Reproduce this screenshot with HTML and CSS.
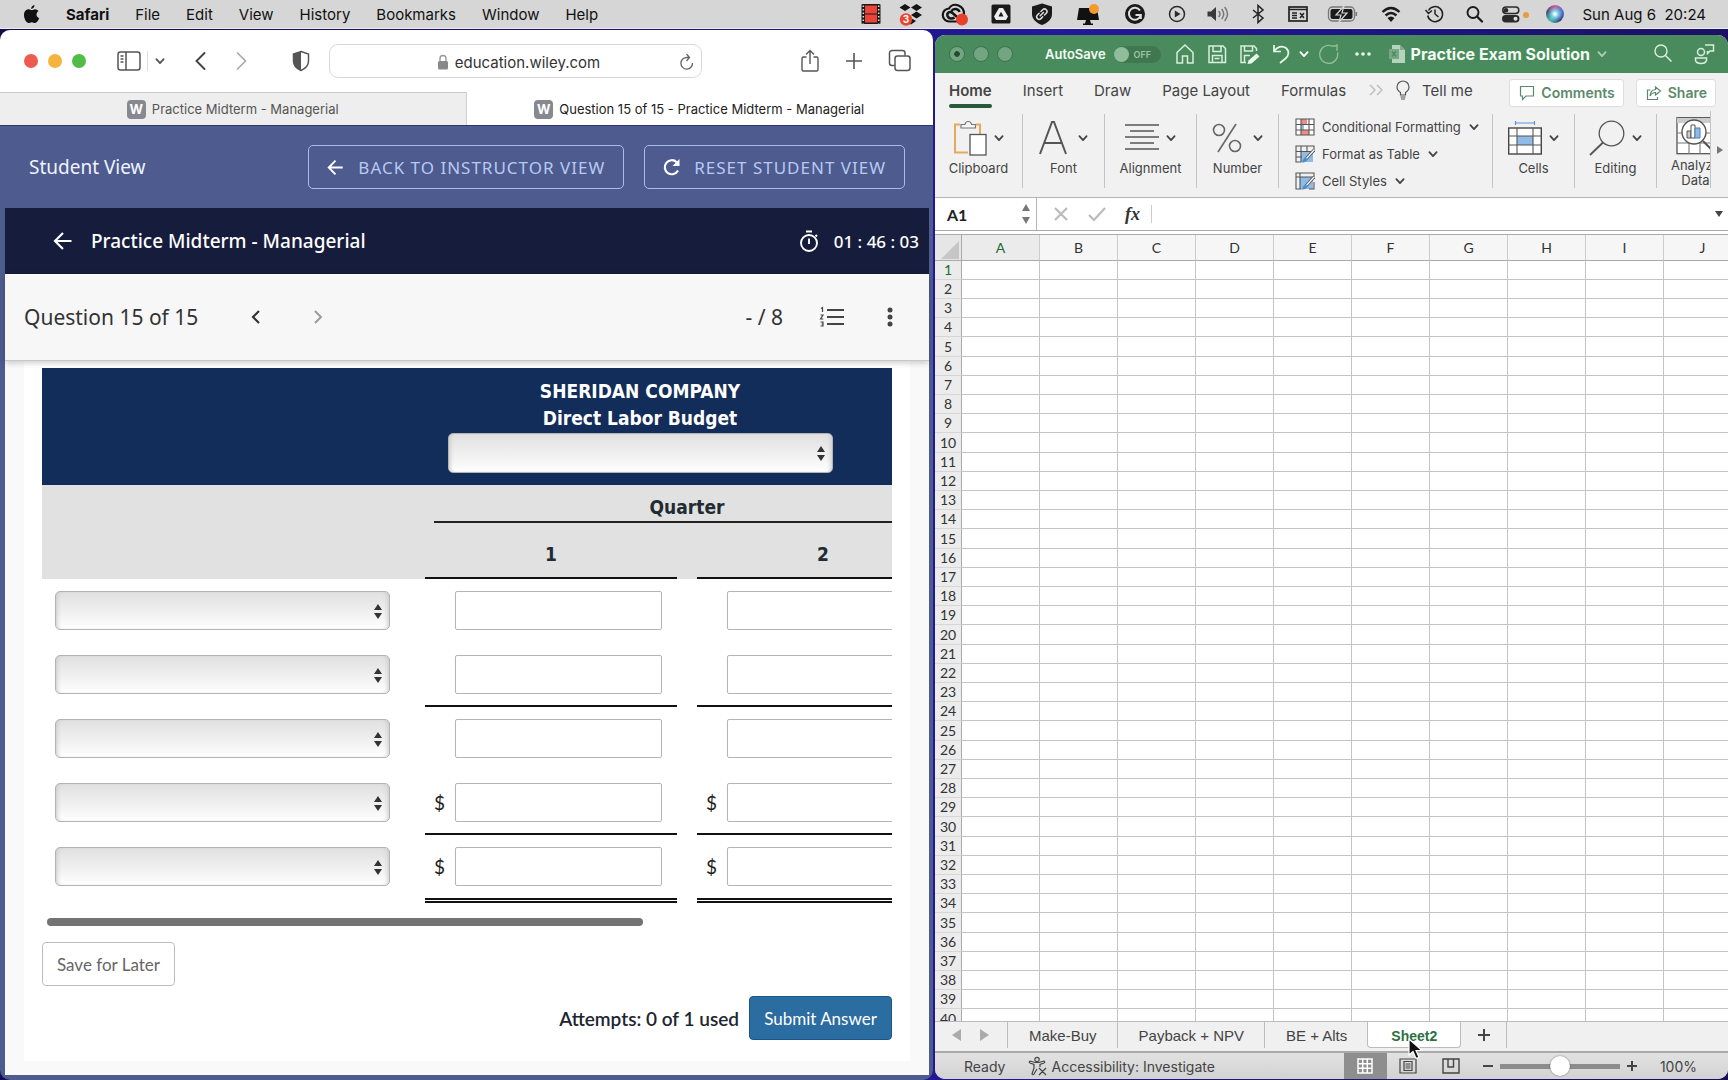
FILE: index.html
```html
<!DOCTYPE html>
<html lang="en">
<head>
<meta charset="utf-8">
<title>Desktop</title>
<meta name="viewport" content="width=device-width, initial-scale=1">
<link rel="stylesheet" href="styles.css">
</head>
<body>
<svg class="defs" aria-hidden="true">
  <symbol id="chev" viewBox="0 0 10 10"><path d="M2 3.500 5 6.800 8 3.500" fill="none" stroke="currentColor" stroke-width="1.500" stroke-linecap="round" stroke-linejoin="round"/></symbol>
  <symbol id="arrow-left" viewBox="0 0 20 20"><path d="M18.500 10H2.500M10 2 2 10l8 8" fill="none" stroke="currentColor" stroke-width="2.200"/></symbol>
</svg>

<header class="menubar">
  <nav class="menus" aria-label="Menu bar">
    <button class="menu" aria-label="Apple"><svg width="17" height="20" viewBox="0 0 17 20"><path d="M11.500 1c.1 1.900-1.500 3.900-3.300 3.900C8 3 9.700 1.100 11.500 1zM12 5.200c1.500 0 2.800.8 3.600 1.900-3.100 1.900-2.600 6 .6 7.200C15.500 16.200 13.800 19 12 19c-1.300 0-1.700-.8-3.200-.8S6.900 19 5.700 19C3.400 19 1 14.800 1 11c0-3.600 2.300-5.700 4.600-5.700 1.400 0 2.400.9 3.300.9.900 0 2-.9 3.100-1z" fill="#111"/></svg></button>
    <button class="menu app">Safari</button>
    <button class="menu">File</button>
    <button class="menu">Edit</button>
    <button class="menu">View</button>
    <button class="menu">History</button>
    <button class="menu">Bookmarks</button>
    <button class="menu">Window</button>
    <button class="menu">Help</button>
  </nav>
  <div class="status-icons">
    <svg width="22" height="22" viewBox="0 0 22 22"><rect x="1.500" y="1" width="19" height="20" rx="1" fill="#1a1a1a"/><rect x="5" y="2.500" width="12" height="8" fill="#ec4238"/><rect x="5" y="11.500" width="12" height="8" fill="#ec4238"/><path d="M3.300 2.500v18M18.700 2.500v18" stroke="#ddd" stroke-width="1.500" stroke-dasharray="1.500 2"/></svg>
    <svg width="24" height="24" viewBox="0 0 24 24"><path d="M6 2l5.500 3.500L6 9 .5 5.500zM17.500 2 23 5.500 17.500 9 12 5.500zM17.500 9.500 23 13l-5.500 3.500L12 13zM12 16l5 3-5 3.500-4-2z" fill="#151515"/><circle cx="7" cy="17.500" r="6.200" fill="#e8442e"/><text x="7" y="21" text-anchor="middle" class="badge-num">3</text></svg>
    <svg width="32" height="24" viewBox="1 0 32 24"><path d="M10.500 19.500a6.500 6.500 0 0 1-.5-13C12 3 16 2 19.500 3.500 23 5 25 8 25 11.500c0 5-3.500 8-8 8z" fill="none" stroke="#151515" stroke-width="2.200"/><path d="M15.500 15.500c-2 1.500-6 1.500-7-1.500s2-5.500 5-3l4.500 4M12.500 9c2-3 7-2.500 8 1" fill="none" stroke="#151515" stroke-width="2.400"/><circle cx="23" cy="17.500" r="6" fill="#e8402a"/></svg>
    <svg width="24" height="22" viewBox="0 0 24 22"><rect x="2.500" y="1.500" width="19" height="19" rx="1.500" fill="#1a1a1a"/><path d="M10 5h4l5 8.500-2 3.500H7l-2-3.500z" fill="#eee"/><path d="M12 8.800l2.600 4.600H9.400z" fill="#1a1a1a"/></svg>
    <svg width="24" height="24" viewBox="0 0 24 24"><path d="M12 1.500l10 3V12c0 5.500-4.500 9-10 11C6.500 21 2 17.500 2 12V4.500z" fill="#1a1a1a"/><g transform="rotate(45 12 12)" fill="none" stroke="#ddd" stroke-width="1.500" stroke-linecap="round"><path d="M9.500 11V8.500a2.500 2.500 0 0 1 5 0V11M9.500 13.500V16a2.500 2.500 0 0 0 5 0v-2.500M12 10v4.500"/></g></svg>
    <svg width="34" height="24" viewBox="0 0 34 24"><path d="M8 6h18l2 12H6z" fill="#111"/><path d="M15 18h4l1 3.500h2V23H12v-1.500h2z" fill="#111"/><circle cx="23" cy="7" r="5" fill="#f39b2d"/></svg>
    <svg width="26" height="24" viewBox="0 0 26 24"><circle cx="13" cy="12" r="10" fill="#1a1a1a"/><path d="M18 8.500A6 6 0 1 0 18.800 13H13.500M18.800 12.500V17" fill="none" stroke="#ddd" stroke-width="2"/></svg>
    <svg width="24" height="24" viewBox="0 0 24 24"><circle cx="12" cy="12" r="7.500" fill="none" stroke="#2a2a2a" stroke-width="1.500"/><path d="M9.800 8.500v7l5.700-3.500z" fill="#2a2a2a"/></svg>
    <svg width="24" height="24" viewBox="0 0 24 24"><path d="M1.500 9.500h3.500L10 5v14l-5-4.500H1.500z" fill="#3a3a3a"/><path d="M13 9.500q2 2.500 0 5M16 7.500q3.500 4.500 0 9M19 5.500q5 6.500 0 13" fill="none" stroke="#777" stroke-width="1.500" stroke-linecap="round"/></svg>
    <svg width="22" height="24" viewBox="0 0 22 24"><path d="M6 8l10 8-5 4.500v-17L16 8 6 16" fill="none" stroke="#222" stroke-width="1.500"/></svg>
    <svg width="24" height="22" viewBox="0 0 24 22"><rect x="3" y="4" width="18" height="14" fill="none" stroke="#222" stroke-width="1.700"/><path d="M3 6.500h18M6 10h5M6 12.500h5M6 15h5M14 10l4 5M18 10l-4 5" stroke="#222" stroke-width="1.500"/></svg>
    <svg width="32" height="22" viewBox="0 0 32 22"><rect x="1.500" y="4" width="26" height="14" rx="4" fill="none" stroke="#777" stroke-width="1.300"/><rect x="3.500" y="6" width="22" height="10" rx="2" fill="#1a1a1a"/><path d="M17 3l-8 9h5l-2 7 8-9h-5z" fill="#1a1a1a" stroke="#d6d6d6" stroke-width="1.200"/><path d="M29.300 9v4" stroke="#777" stroke-width="1.600"/></svg>
    <svg width="30" height="22" viewBox="0 0 30 22"><g fill="none" stroke="#1a1a1a" stroke-width="2.400"><path d="M6.500 9q8.500-8 17 0M9.600 12.500q5.400-5 10.800 0"/></g><path d="M15 19l-3.500-4q3.500-3 7 0z" fill="#1a1a1a"/></svg>
    <svg width="24" height="24" viewBox="0 0 24 24"><path d="M5.500 8.500a7.500 7.500 0 1 1-.8 5M2.500 8l3 3.500L9 8.500M12 7.500V12l3.500 3" fill="none" stroke="#222" stroke-width="1.500"/></svg>
    <svg width="20" height="24" viewBox="0 0 20 24"><circle cx="9" cy="10.500" r="5.500" fill="none" stroke="#1a1a1a" stroke-width="1.900"/><path d="M13 14.500l5 5" stroke="#1a1a1a" stroke-width="2.300" stroke-linecap="round"/></svg>
    <svg width="28" height="20" viewBox="0 0 28 20"><rect x="1.800" y="3" width="16" height="6.500" rx="3.200" fill="none" stroke="#2a2a2a" stroke-width="1.500"/><circle cx="5" cy="6.200" r="2.300" fill="#2a2a2a"/><rect x="1" y="11" width="17.500" height="7.500" rx="3.700" fill="#2a2a2a"/><circle cx="14.500" cy="14.700" r="2" fill="#ddd"/><circle cx="25" cy="11" r="3" fill="#ec9a3c"/></svg>
    <span class="siri"></span>
    <span class="clock">Sun Aug 6&nbsp; 20:24</span>
  </div>
</header>

<main class="desktop">
  <section class="safari" aria-label="Safari">
    <div class="toolbar">
      <div class="lights"><button class="light red" aria-label="Close"></button><button class="light amber" aria-label="Minimise"></button><button class="light green" aria-label="Zoom"></button></div>
      <div class="side-tools">
        <button class="icon-btn" aria-label="Sidebar"><svg width="24" height="20" viewBox="0 0 24 20"><g fill="none" stroke="#555" stroke-width="1.500"><rect x="1" y="1" width="22" height="18" rx="2.500"/><path d="M9 1v18M3.500 5h3M3.500 8h3M3.500 11h3"/></g></svg></button>
        <span class="rule"></span>
        <button class="icon-btn" aria-label="Tab groups"><svg class="s12"><use href="#chev"/></svg></button>
      </div>
      <div class="nav-tools">
        <button class="icon-btn" aria-label="Back"><svg width="12" height="20" viewBox="0 0 12 20"><path d="M10.500 2 2.500 10l8 8" fill="none" stroke="#444" stroke-width="1.900" stroke-linecap="round"/></svg></button>
        <button class="icon-btn" aria-label="Forward"><svg width="12" height="20" viewBox="0 0 12 20"><path d="M1.500 2l8 8-8 8" fill="none" stroke="#aaa" stroke-width="1.700" stroke-linecap="round"/></svg></button>
      </div>
      <button class="icon-btn" aria-label="Privacy report"><svg width="18" height="22" viewBox="0 0 18 22"><path d="M9 1.500 16.500 4v7c0 4.500-3 7.500-7.500 9.500C4.500 18.500 1.500 15.500 1.500 11V4z" fill="none" stroke="#555" stroke-width="1.500"/><path d="M9 1.500V20.500C4.500 18.500 1.500 15.500 1.500 11V4z" fill="#555"/></svg></button>
      <div class="address">
        <span class="url"><svg width="12" height="16" viewBox="0 0 12 16"><rect x="1" y="7" width="10" height="8.500" rx="1.500" fill="#888"/><path d="M3 7V4.500a3 3 0 0 1 6 0V7" fill="none" stroke="#999" stroke-width="1.400"/></svg>education.wiley.com</span>
        <button class="icon-btn" aria-label="Reload"><svg width="16" height="18" viewBox="0 0 16 18"><path d="M13.500 10A5.800 5.800 0 1 1 8 4.500h2M7.500 1l3 3.500-3 3.500" fill="none" stroke="#666" stroke-width="1.300"/></svg></button>
      </div>
      <div class="end-tools">
        <button class="icon-btn" aria-label="Share"><svg width="20" height="24" viewBox="0 0 20 24"><path d="M6.500 8H3.500A1.500 1.500 0 0 0 2 9.500v11A1.500 1.500 0 0 0 3.500 22h13a1.500 1.500 0 0 0 1.500-1.500v-11A1.500 1.500 0 0 0 16.500 8h-3M10 15V2M6 5.500l4-4 4 4" fill="none" stroke="#555" stroke-width="1.400"/></svg></button>
        <button class="icon-btn" aria-label="New tab"><svg width="20" height="24" viewBox="0 0 20 24"><path d="M2 12h16M10 4v16" stroke="#555" stroke-width="1.600"/></svg></button>
        <button class="icon-btn" aria-label="Tab overview"><svg width="24" height="24" viewBox="0 0 24 24"><g fill="none" stroke="#555" stroke-width="1.500"><rect x="7" y="7" width="15" height="14.500" rx="2.500"/><path d="M6.500 16.500H4A2.500 2.500 0 0 1 1.500 14V4A2.500 2.500 0 0 1 4 1.500h10.500A2.500 2.500 0 0 1 17 4v2.500"/></g></svg></button>
      </div>
    </div>
    <div class="tabs">
      <a href="#midterm" class="tab"><span class="favicon">W</span>Practice Midterm - Managerial</a>
      <a href="#question" class="tab active"><span class="favicon">W</span>Question 15 of 15 - Practice Midterm - Managerial</a>
    </div>
    <div class="student-bar">
      <span class="student-title">Student View</span>
      <div class="student-actions">
        <button class="outline-btn"><svg width="17" height="17"><use href="#arrow-left"/></svg>BACK TO INSTRUCTOR VIEW</button>
        <button class="outline-btn"><svg width="17" height="18" viewBox="0 0 17 18"><path d="M15 12.500A7 7 0 1 1 13.700 4.200" fill="none" stroke="#fff" stroke-width="2.200"/><path d="M16.500 1v7h-7z" fill="#fff"/></svg>RESET STUDENT VIEW</button>
      </div>
    </div>
    <div class="exam-bar">
      <button class="icon-btn light-icon" aria-label="Back to list"><svg width="20" height="20"><use href="#arrow-left"/></svg></button>
      <h1 class="exam-title">Practice Midterm - Managerial</h1>
      <svg width="20" height="22" viewBox="0 0 20 22"><g fill="none" stroke="#fff" stroke-width="1.900"><circle cx="10" cy="13" r="8"/><path d="M10 8.500V14M7 1.500h6M16.500 5l1.500 1.500"/></g></svg>
      <span class="timer">01 : 46 : 03</span>
    </div>
    <div class="question-bar">
      <h2 class="question-title">Question 15 of 15</h2>
      <button class="icon-btn" aria-label="Previous question"><svg width="9" height="14" viewBox="0 0 9 14"><path d="M8 1 2 7l6 6" fill="none" stroke="#333" stroke-width="2.200"/></svg></button>
      <button class="icon-btn" aria-label="Next question"><svg width="9" height="14" viewBox="0 0 9 14"><path d="M1 1l6 6-6 6" fill="none" stroke="#999" stroke-width="1.900"/></svg></button>
      <div class="question-end">
        <span>- / 8</span>
        <button class="icon-btn" aria-label="Question list"><svg width="26" height="22" viewBox="0 0 26 22"><path d="M8 4h17M8 11h17M8 18h17" stroke="#444" stroke-width="2"/><path d="M2 2.500 3.500 1.500V6M1.500 9h2.500l-2.500 4h2.800M1.500 16h2.500v4H1.500M2.500 18H4" fill="none" stroke="#444" stroke-width="1.200"/></svg></button>
        <button class="icon-btn" aria-label="More"><svg width="6" height="20" viewBox="0 0 6 20"><g fill="#444"><circle cx="3" cy="3" r="2.500"/><circle cx="3" cy="10" r="2.500"/><circle cx="3" cy="17" r="2.500"/></g></svg></button>
      </div>
    </div>
    <div class="page">
      <div class="card">
        <div class="scroller">
          <table class="budget">
            <colgroup><col class="c-label"><col class="c-value"><col class="c-gap"><col class="c-value"><col class="c-gap"><col class="c-value"><col class="c-end"></colgroup>
            <thead>
              <tr class="title-row"><th colspan="7">SHERIDAN COMPANY<br>Direct Labor Budget<br><select class="pick period" aria-label="Budget period"><option></option></select></th></tr>
              <tr class="group-row"><th></th><th colspan="3"><div class="group-name">Quarter</div></th><th colspan="3"></th></tr>
              <tr class="col-row"><th></th><th class="line">1</th><th></th><th class="line">2</th><th></th><th class="line"></th><th></th></tr>
            </thead>
            <tbody>
              <tr><td><select class="pick" aria-label="Line 1"><option></option></select></td><td><div class="entry"><input aria-label="Line 1 quarter 1"></div></td><td></td><td><div class="entry"><input aria-label="Line 1 quarter 2"></div></td><td></td><td></td><td></td></tr>
              <tr><td><select class="pick" aria-label="Line 2"><option></option></select></td><td class="line"><div class="entry"><input aria-label="Line 2 quarter 1"></div></td><td></td><td class="line"><div class="entry"><input aria-label="Line 2 quarter 2"></div></td><td></td><td class="line"></td><td></td></tr>
              <tr><td><select class="pick" aria-label="Line 3"><option></option></select></td><td><div class="entry"><input aria-label="Line 3 quarter 1"></div></td><td></td><td><div class="entry"><input aria-label="Line 3 quarter 2"></div></td><td></td><td></td><td></td></tr>
              <tr><td><select class="pick" aria-label="Line 4"><option></option></select></td><td class="line"><div class="entry"><span>$</span><input aria-label="Line 4 quarter 1"></div></td><td></td><td class="line"><div class="entry"><span>$</span><input aria-label="Line 4 quarter 2"></div></td><td></td><td class="line"></td><td></td></tr>
              <tr class="total"><td><select class="pick" aria-label="Line 5"><option></option></select></td><td class="double"><div class="entry"><span>$</span><input aria-label="Line 5 quarter 1"></div></td><td></td><td class="double"><div class="entry"><span>$</span><input aria-label="Line 5 quarter 2"></div></td><td></td><td class="double"></td><td></td></tr>
            </tbody>
          </table>
        </div>
        <div class="track"><div class="thumb"></div></div>
        <button class="save">Save for Later</button>
        <div class="submit-row"><span class="attempts">Attempts: 0 of 1 used</span><button class="submit">Submit Answer</button></div>
      </div>
    </div>
  </section>

  <section class="excel" aria-label="Spreadsheet">
    <div class="titlebar">
      <div class="lights dim"><span class="light edited"></span><span class="light"></span><span class="light"></span></div>
      <label class="autosave">AutoSave <span class="toggle"><input type="checkbox">OFF</span></label>
      <div class="quick">
        <svg width="24" height="22" viewBox="0 0 24 22"><path d="M4 9.500 12 2l8 7.500V20h-5.500v-7h-5v7H4z" fill="none" stroke="#d9f0dd" stroke-width="1.500"/></svg>
        <svg width="24" height="22" viewBox="0 0 24 22"><g fill="none" stroke="#d9f0dd" stroke-width="1.500"><path d="M4 3h14l2.500 2.500V19.500H4z"/><path d="M8 3v5.500h8V3M7.500 19.500V12.500h9.500v7M9.500 15.500h5"/></g></svg>
        <svg width="24" height="22" viewBox="0 0 24 22"><g fill="none" stroke="#d9f0dd" stroke-width="1.500"><path d="M9 19.500H4V3h13l2.500 2.500V8"/><path d="M7.500 3v5h8V3M7.500 19.500V12.500H13"/></g><path d="M19.500 10.500l3 3-8 7-4 .5 1-3.500z" fill="#e8fbe9"/></svg>
        <svg width="24" height="22" viewBox="0 0 24 22"><path d="M5 2v6.500h7M5 8C8 4 13 2 17 5c4 3.500 2.500 8-.5 10.500L11 20" fill="none" stroke="#e8fbe9" stroke-width="1.700"/></svg>
      </div>
      <svg class="s12 white"><use href="#chev"/></svg>
      <svg class="redo" width="20" height="22" viewBox="0 0 20 22"><path d="M18.500 9.500A9 9 0 1 1 13 3h5M18 1v7" fill="none" stroke="#8fc09c" stroke-width="1.300"/></svg>
      <svg class="more" width="18" height="6" viewBox="0 0 18 6"><g fill="#e8fbe9"><circle cx="3" cy="3" r="1.800"/><circle cx="9" cy="3" r="1.800"/><circle cx="15" cy="3" r="1.800"/></g></svg>
      <div class="doc"><svg width="16" height="18" viewBox="0 0 16 18"><path d="M3 0h8l5 5v13H3z" fill="#b5d3bd"/><path d="M11 0v5h5" fill="#7fab8b"/><rect y="4" width="10" height="10" fill="#77a885"/><path d="M3 6.500l4 5M7 6.500l-4 5" stroke="#4a8b5e" stroke-width="1.300"/></svg>Practice Exam Solution<svg class="s12 pale"><use href="#chev"/></svg></div>
      <div class="title-end">
        <svg width="20" height="20" viewBox="0 0 20 20"><circle cx="8" cy="8" r="6" fill="none" stroke="#d9f0dd" stroke-width="1.400"/><path d="M12.500 12.500l6 6" stroke="#d9f0dd" stroke-width="1.500"/></svg>
        <svg width="22" height="22" viewBox="0 0 22 22"><g fill="none" stroke="#d9f0dd" stroke-width="1.500"><circle cx="8" cy="9" r="3.500"/><path d="M2.500 15h11v2.500q-1 3-5.500 3t-5.500-3zM12 2h8.500v6H17l-2.500 2.500V8"/></g></svg>
      </div>
    </div>
    <div class="ribbon-tabs">
      <a href="#home" class="current">Home</a><a href="#insert">Insert</a><a href="#draw">Draw</a><a href="#layout">Page Layout</a><a href="#formulas">Formulas</a>
      <svg class="double-chev" width="16" height="12" viewBox="0 0 16 12"><path d="M2 1l5 5-5 5M9 1l5 5-5 5" fill="none" stroke="#bbb" stroke-width="1.400"/></svg>
      <button class="tell"><svg width="14" height="20" viewBox="0 0 14 20"><path d="M4.500 15V12.500C2 11 1 9 1 7a6 6 0 0 1 12 0c0 2-1 4-3.500 5.500V15zM4.500 17h5M5 19h4" fill="none" stroke="#555" stroke-width="1.200"/></svg>Tell me</button>
      <div class="ribbon-end">
        <button class="pill"><svg width="16" height="16" viewBox="0 0 16 16"><path d="M1.500 1.500h13v9.500H7L3.500 14.500V11h-2z" fill="none" stroke="#5b8a69" stroke-width="1.200"/></svg>Comments</button>
        <button class="pill"><svg width="16" height="16" viewBox="0 0 16 16"><path d="M4.500 5H1.500v9.500h10V12M9.500 2l5 4-5 4V7.500Q6 7.500 4 11q.5-6 5.500-6.500z" fill="none" stroke="#5b8a69" stroke-width="1.200"/></svg>Share</button>
      </div>
    </div>
    <div class="ribbon">
      <div class="group w88"><div class="tool"><svg width="34" height="36" viewBox="0 0 34 36"><path d="M7 4.500H2v28h13M23 4.500h4V14" fill="none" stroke="#e9a95a" stroke-width="2"/><path d="M8 8V4.500h4c.5-4 6-4 6.500 0h4V8z" fill="#f6f6f6" stroke="#777" stroke-width="1.200"/><rect x="17" y="14.500" width="16" height="20.500" fill="#fff" stroke="#555" stroke-width="1.300"/></svg><svg class="s12"><use href="#chev"/></svg></div>Clipboard</div>
      <div class="group w82"><div class="tool wide"><svg width="28" height="36" viewBox="0 0 28 36"><path d="M1 34 13 2h2l12 32M5.500 23h17" fill="none" stroke="#555" stroke-width="2"/></svg><svg class="s12"><use href="#chev"/></svg></div>Font</div>
      <div class="group w92"><div class="tool"><svg width="34" height="30" viewBox="0 0 34 30"><path d="M0 2h34M5 8h24M0 14h34M5 20h24M0 26h34" stroke="#555" stroke-width="1.400"/></svg><svg class="s12"><use href="#chev"/></svg></div>Alignment</div>
      <div class="group w82"><div class="tool wide"><svg width="30" height="32" viewBox="0 0 30 32"><g fill="none" stroke="#666" stroke-width="1.600"><circle cx="7" cy="8" r="5.500"/><circle cx="23" cy="24" r="5.500"/><path d="M24 2 6 30"/></g></svg><svg class="s12"><use href="#chev"/></svg></div>Number</div>
      <div class="styles-group">
        <button class="style-row"><svg width="20" height="18" viewBox="0 0 20 18"><rect x="1" y="1" width="18" height="16" fill="#fff"/><path d="M6 1h6v5H6zM6 12h8v5H6z" fill="#f08a86"/><path d="M6 6h3v6H6z" fill="#8fbbe6"/><path d="M1 1h18v16H1zM1 6.500h18M1 12h18M6 1v16M14 1v16" fill="none" stroke="#555" stroke-width="1.100"/></svg>Conditional Formatting<svg class="s12"><use href="#chev"/></svg></button>
        <button class="style-row"><svg width="20" height="18" viewBox="0 0 20 18"><path d="M6 6h12v11H6z" fill="#8fbbe6"/><path d="M19 5V1H1v16h5M1 6.500h18M1 12h6M6 1v16M12 1v6" fill="none" stroke="#555" stroke-width="1.100"/><path d="M19 5l-8 9" stroke="#555" stroke-width="3"/><path d="M19 5l-8 9" stroke="#fff" stroke-width="1.200"/><path d="M10 12.500q3 1 2 3t-6 2q2-1 2-3z" fill="#4f8fd0"/></svg>Format as Table<svg class="s12"><use href="#chev"/></svg></button>
        <button class="style-row"><svg width="20" height="18" viewBox="0 0 20 18"><path d="M5 5h13v12H5z" fill="#8fbbe6"/><path d="M19 5V1H1v16h5M19 10v7h-5M1 5h18M5 1v16" fill="none" stroke="#555" stroke-width="1.100"/><path d="M19 5l-8 9" stroke="#555" stroke-width="3"/><path d="M19 5l-8 9" stroke="#fff" stroke-width="1.200"/><path d="M10 12.500q3 1 2 3t-6 2q2-1 2-3z" fill="#4f8fd0"/></svg>Cell Styles<svg class="s12"><use href="#chev"/></svg></button>
      </div>
      <div class="group w82"><div class="tool"><svg width="34" height="34" viewBox="0 0 34 34"><path d="M7.500 2h19M7.500 0v4M26.500 0v4" stroke="#5b95cf" stroke-width="1.200"/><rect x="0.700" y="7" width="32.600" height="26" fill="#fff" stroke="#444" stroke-width="1.400"/><path d="M9 15h16v9H9z" fill="#8fbbe6"/><path d="M0 15h34M0 24h34M9 7v26M25 7v26" stroke="#555" stroke-width="1.100"/></svg><svg class="s12"><use href="#chev"/></svg></div>Cells</div>
      <div class="group w82"><div class="tool"><svg width="36" height="36" viewBox="0 0 36 36"><circle cx="22.500" cy="13.500" r="12.300" fill="none" stroke="#555" stroke-width="1.300"/><path d="M14 22.500 1 35" stroke="#555" stroke-width="1.800"/></svg><svg class="s12"><use href="#chev"/></svg></div>Editing</div>
      <div class="clip"><div class="group w78"><div class="tool"><svg width="40" height="38" viewBox="0 0 40 38"><rect x="1" y="0.700" width="38" height="36" fill="#fff" stroke="#555" stroke-width="1.300"/><path d="M1 1h38v5H1z" fill="#ccc"/><path d="M1 16h38M1 26h38M13 26v11M24 26v11" stroke="#777" stroke-width="1.100"/><circle cx="18" cy="15" r="12" fill="#fff" stroke="#555" stroke-width="1.400"/><path d="M27 24l8 8" stroke="#555" stroke-width="2"/><path d="M11 14h4v7h-4z" fill="#ccc" stroke="#555"/><path d="M15 8h4v13h-4z" fill="#fff" stroke="#555"/><path d="M19 11h5v10h-5z" fill="#8fbbe6" stroke="#4a7fb5"/></svg></div>Analyze<br>Data</div></div>
      <button class="ribbon-more" aria-label="More tools"><svg width="8" height="10" viewBox="0 0 8 10"><path d="M1 1v8l6-4z" fill="#777"/></svg></button>
    </div>
    <div class="formula-bar">
      <span class="cell-ref">A1</span>
      <svg width="10" height="24" viewBox="0 0 10 24"><path d="M1 9h8L5 2zM1 15h8l-4 7z" fill="#777"/></svg>
      <span class="rule tall"></span>
      <svg class="cancel" width="16" height="16" viewBox="0 0 16 16"><path d="M2 2l12 12M14 2 2 14" stroke="#bbb" stroke-width="2.200"/></svg>
      <svg width="18" height="16" viewBox="0 0 18 16"><path d="M1 9l5 5L17 2" fill="none" stroke="#bbb" stroke-width="2.200"/></svg>
      <span class="fx">fx</span>
      <input class="formula" aria-label="Formula">
      <svg width="10" height="8" viewBox="0 0 10 8"><path d="M1 1h8L5 7z" fill="#444"/></svg>
    </div>
    <div class="grid-area"><table class="grid"><thead><tr id="letters"><th class="corner"><svg width="18" height="18" viewBox="0 0 18 18"><path d="M18 0v18H0z" fill="#c6c6c6"/></svg></th></tr></thead><tbody id="rows"></tbody></table></div>
    <div class="sheet-tabs">
      <div class="sheet-arrows"><svg width="10" height="12" viewBox="0 0 10 12"><path d="M9 0v12L0 6z" fill="#aaa"/></svg><svg width="10" height="12" viewBox="0 0 10 12"><path d="M1 0v12l9-6z" fill="#aaa"/></svg></div>
      <a href="#s1">Make-Buy</a><a href="#s2">Payback + NPV</a><a href="#s3" class="bare">BE + Alts</a>
      <a href="#s4" class="on">Sheet2<svg class="pointer" width="16" height="22" viewBox="0 0 16 22"><path d="M1 1v16l4-3.500 3 7 3-1.300-3-6.700h6z" fill="#111" stroke="#fff" stroke-width="1.200"/></svg></a>
      <button class="add" aria-label="Add sheet"><svg width="14" height="14" viewBox="0 0 14 14"><path d="M7 1v12M1 7h12" stroke="#444" stroke-width="2"/></svg></button>
    </div>
    <div class="status">
      <span>Ready</span>
      <span class="access"><svg width="20" height="20" viewBox="0 0 20 20"><g fill="none" stroke="#444" stroke-width="1.200"><circle cx="9" cy="3.500" r="2.200"/><path d="M2 5q-1.500 1 0 2l4 1.500V12l-2 6q1 1.500 2 0l3-5M16 5q1.500 1 0 2l-4 1.500V11M2 5l5 1.500h4L16 5M11 12l7 7M18 12l-7 7"/></g></svg>Accessibility: Investigate</span>
      <div class="views">
        <button class="view sel" aria-label="Normal view"><svg width="16" height="16" viewBox="0 0 16 16"><path d="M1 1h14v14H1zM1 5.700h14M1 10.300h14M5.700 1v14M10.300 1v14" fill="none" stroke="#fff" stroke-width="1.500"/></svg></button>
        <button class="view" aria-label="Page layout view"><svg width="18" height="16" viewBox="0 0 18 16"><path d="M1 1h16v14H1zM5 3.500h8v9H5zM6.500 6h5M6.500 8h5M6.500 10h5" fill="none" stroke="#444" stroke-width="1.200"/></svg></button>
        <button class="view" aria-label="Page break view"><svg width="18" height="16" viewBox="0 0 18 16"><path d="M1 1h16v14H1zM6 1v8h5.500V1" fill="none" stroke="#444" stroke-width="1.400"/></svg></button>
      </div>
      <div class="zoom"><svg width="10" height="10" viewBox="0 0 10 10"><path d="M0 5h10" stroke="#444" stroke-width="2"/></svg><input type="range" min="0" max="100" value="50" aria-label="Zoom"><svg width="10" height="10" viewBox="0 0 10 10"><path d="M0 5h10M5 0v10" stroke="#444" stroke-width="2"/></svg></div>
      <span>100%</span>
    </div>
  </section>
</main>
<script src="script.js"></script>
</body>
</html>
```
FILE: styles.css
```css
* { box-sizing: border-box; }
body { margin: 0; height: 100vh; display: flex; flex-direction: column; overflow: hidden; background: linear-gradient(100deg, #140a45, #24189a 55%, #180f55); font-family: Inter, "Liberation Sans", sans-serif; font-size: 15px; color: #222; }
button { border: 0; padding: 0; background: none; font: inherit; color: inherit; display: inline-flex; align-items: center; }
a { color: inherit; text-decoration: none; }
svg { flex: none; display: block; }
.defs { position: absolute; width: 0; height: 0; }
.s12 { width: 12px; height: 12px; }
.white { color: #fff; }
.pale { color: #a9d0b3; }
.rule { width: 1px; height: 20px; background: #ddd; }

.menubar { flex: none; height: 29px; padding: 0 22px 0 10px; background: #d6d6d6; border-bottom: 1px solid #ececf2; display: flex; align-items: center; justify-content: space-between; color: #111; }
.menus { display: flex; }
.menu { padding: 0 13px; height: 26px; }
.app { font-weight: 700; }
.status-icons { display: flex; align-items: center; gap: 17px; }
.badge-num { font: bold 10px Inter, sans-serif; fill: #fff; }
.siri { width: 18px; height: 18px; margin-right: 2px; border-radius: 50%; background: radial-gradient(circle, #fff 5%, #7fd0e8 25%, transparent 60%), conic-gradient(#d05a9a, #4a6fd0, #3a3f80, #3bc0a5, #4a4a70, #d05a9a); }
.clock { white-space: pre; }

.desktop { flex: 1; min-height: 0; display: grid; grid-template-columns: 933fr 793fr; gap: 2px; padding-top: 1px; }

.safari { min-width: 0; background: #4d5b8f; border-radius: 10px; overflow: hidden; display: flex; flex-direction: column; }
.toolbar { flex: none; height: 62px; background: #fff; display: flex; align-items: center; padding: 0 21px 0 24px; }
.lights { display: flex; gap: 10px; }
.light { width: 14px; height: 14px; border-radius: 50%; }
.red { background: #ed5b50; }
.amber { background: #f5b53d; }
.green { background: #52bd46; }
.side-tools { display: flex; align-items: center; gap: 6px; margin-left: 31px; color: #555; }
.nav-tools { display: flex; gap: 30px; margin: 0 44px 0 28px; }
.address { flex: 1; height: 34px; margin: 0 98px 0 19px; border: 1px solid #d8d8d8; border-radius: 9px; display: flex; align-items: center; padding: 2px 6px 0 28px; }
.url { flex: 1; display: flex; align-items: center; justify-content: center; gap: 6px; color: #333; font-size: 15px; }
.end-tools { display: flex; align-items: center; gap: 24px; }

.tabs { flex: none; height: 34px; display: grid; grid-template-columns: 1fr 1fr; background: #fff; border-bottom: 1px solid #2c376b; font-size: 13px; color: #555; }
.tab { display: flex; align-items: center; justify-content: center; gap: 6px; background: #eee; border-top: 1px solid #ccc; border-right: 1px solid #d0d0d0; }
.tab.active { background: #fff; border-color: transparent; color: #222; }
.favicon { width: 19px; height: 19px; border-radius: 4px; background: #888890; color: #fff; font-size: 13px; font-weight: 700; display: grid; place-items: center; }

.student-bar { flex: none; height: 82px; display: flex; align-items: center; justify-content: space-between; padding: 0 28px 0 29px; font-family: "Noto Sans", sans-serif; color: #f0f3ff; }
.student-title { font-size: 19px; }
.student-actions { display: flex; gap: 20px; }
.outline-btn { height: 44px; padding: 0 18px; gap: 14px; border: 1px solid #a9bde8; border-radius: 5px; color: #b9c9f2; font-size: 17px; letter-spacing: 1px; }
.outline-btn svg { color: #fff; }

.exam-bar { flex: none; height: 66px; margin: 0 4px 0 5px; padding: 0 10px 0 48px; background: #161c3b; color: #fff; display: flex; align-items: center; font-family: "Noto Sans", sans-serif; }
.exam-title { flex: 1; margin: 0 0 0 18px; font-size: 19px; font-weight: 500; }
.timer { margin-left: 15px; font-size: 17px; font-weight: 500; }

.question-bar { flex: none; height: 87px; margin: 0 4px 0 5px; padding: 0 36px 0 19px; background: #f7f7f7; border-bottom: 1px solid #c4c8c8; box-shadow: 0 2px 6px rgba(0,0,0,.2); position: relative; display: flex; align-items: center; font: 21px "Noto Sans", sans-serif; color: #333; }
.question-title { margin: 0 53px 0 0; font: inherit; }
.question-title + button { margin-right: 54px; }
.question-end { margin-left: auto; display: flex; align-items: center; gap: 36px; }
.question-end button:last-child { margin-left: 6px; }

.page { flex: 1; margin: 0 4px 5px 5px; padding: 0 19px; background: #f9f9f9; font-family: Lato, sans-serif; }
.card { background: #fff; padding: 7px 18px 21px; display: flex; flex-direction: column; align-items: stretch; }
.scroller { overflow: hidden; }
.budget { width: 1196px; table-layout: fixed; border-collapse: separate; border-spacing: 0; font-size: 19px; }
.budget th, .budget td { padding: 0; }
.c-label { width: 383px; }
.c-value { width: 252px; }
.c-gap { width: 20px; }
.c-end { width: 17px; }
.budget th { font-family: "DejaVu Sans Condensed", "Noto Sans", sans-serif; font-weight: 700; color: #222b33; }
.budget .title-row th { height: 117px; padding: 10px 0 12px; background: #132d5a; color: #fff; line-height: 27px; vertical-align: top; }
.group-row th, .col-row th { background: #e1e1e1; }
.group-row th { height: 38px; vertical-align: bottom; }
.group-name { margin: 0 9px; border-bottom: 2px solid #222; line-height: 27px; }
.budget .col-row th { height: 56px; padding-top: 8px; }
.budget .line { border-bottom: 2px solid #111; }
.budget .double { border-bottom: 5px double #111; }
.budget td { height: 64px; padding-top: 12px; vertical-align: top; }
.budget .total td { height: 68px; }
.pick { appearance: none; display: block; width: 335px; height: 39px; margin-left: 13px; border: 1px solid #b4b4b4; border-radius: 5px; box-shadow: inset 4px 0 4px -3px #c8c8c8, inset -4px 0 4px -3px #c8c8c8; background: url("data:image/svg+xml,%3Csvg xmlns='http://www.w3.org/2000/svg' width='8' height='16'%3E%3Cpath d='M0 7h8L4 1zM0 10h8l-4 6z' fill='%23333'/%3E%3C/svg%3E") no-repeat right 7px center, linear-gradient(#e0e0e0, #f0f0f0 55%, #fff); }
.period { width: 385px; height: 40px; margin: 1px auto 0; }
.entry { display: flex; align-items: center; justify-content: flex-end; gap: 10px; padding-right: 15px; color: #222; }
.entry input { width: 207px; height: 39px; border: 1px solid #b4b4b4; border-radius: 2px; background: #fff; }
.track { padding: 15px 5px 16px; }
.thumb { width: 71%; height: 8px; border-radius: 4px; background: #737373; }
.save, .submit { height: 44px; border-radius: 4px; justify-content: center; font-size: 17px; }
.save { align-self: flex-start; width: 133px; border: 1px solid #bfbfbf; color: #666; }
.submit-row { display: flex; justify-content: flex-end; align-items: center; gap: 10px; margin-top: 10px; }
.attempts { font-size: 19px; font-weight: 600; color: #1c2530; }
.submit { width: 143px; background: #2b6ca1; border: 1px solid #1c5587; color: #fff; }

.excel { min-width: 0; min-height: 0; margin-top: 5px; margin-bottom: 1px; border-radius: 10px; overflow: hidden; display: flex; flex-direction: column; background: #f1f1f1; color: #444; }
.titlebar { flex: none; height: 38px; background: #4a8b5d; display: flex; align-items: center; color: #f2fbf3; padding: 0 13px 0 14px; white-space: nowrap; }
.dim { gap: 8px; }
.dim .light { width: 16px; height: 16px; background: #74a583; border: 1px solid #3c724d; }
.dim .edited { background: radial-gradient(#244a30 25%, #74a583 32%); }
.autosave { display: flex; align-items: center; gap: 8px; margin: 0 12px 0 32px; font-size: 13px; font-weight: 600; }
.toggle { width: 47px; height: 17px; border-radius: 9px; background: #41774f; display: flex; align-items: center; gap: 5px; font-size: 9px; color: #9cc5a6; }
.toggle input { appearance: none; width: 15px; height: 15px; margin: 0; border-radius: 50%; background: #90be9d; }
.quick { display: flex; gap: 8px; margin-right: 5px; }
.redo { margin: 0 15px 0 9px; }
.doc { display: flex; align-items: center; gap: 6px; margin-left: 17px; font-size: 16px; font-weight: 700; }
.title-end { display: flex; gap: 20px; margin-left: auto; }

.ribbon-tabs { flex: none; height: 38px; display: flex; align-items: center; gap: 31px; padding: 0 12px 4px 14px; font-size: 15px; white-space: nowrap; }
.current { font-weight: 600; position: relative; }
.current::after { content: ""; position: absolute; left: 0; right: 0; bottom: -8px; height: 4px; border-radius: 2px; background: #28593a; }
.double-chev { margin-left: -9px; }
.tell { gap: 12px; margin-left: -19px; }
.ribbon-end { display: flex; gap: 12px; margin-left: auto; padding-top: 5px; }
.pill { height: 28px; padding: 0 8px 0 9px; gap: 6px; background: #fff; border: 1px solid #ddd; border-radius: 3px; color: #5b8a69; font-size: 14px; font-weight: 600; }

.ribbon { flex: none; height: 87px; padding-bottom: 9px; border-bottom: 1px solid #b5b5b5; display: flex; font-size: 13px; color: #444; }
.group { flex: none; height: 74px; margin-top: 3px; border-right: 1px solid #c4c4c4; display: flex; flex-direction: column; align-items: center; line-height: 15px; text-align: center; }
.w88 { width: 88px; }
.w82 { width: 82px; }
.w92 { width: 92px; }
.w78 { width: 78px; }
.tool { height: 47px; display: flex; align-items: center; gap: 6px; }
.wide { gap: 10px; }
.styles-group { flex: 1; height: 74px; margin-top: 3px; padding: 2px 0 0 16px; border-right: 1px solid #c4c4c4; display: flex; flex-direction: column; gap: 5px; align-items: flex-start; white-space: nowrap; }
.style-row { flex: none; height: 22px; gap: 7px; }
.clip { flex: none; width: 54px; overflow: hidden; border-right: 1px solid #c4c4c4; }
.ribbon-more { flex: none; width: 17px; justify-content: center; }

.formula-bar { flex: none; height: 32px; background: #fff; display: flex; align-items: center; padding: 0 4px 0 12px; }
.cell-ref { width: 74px; font: bold 16px Lato, sans-serif; color: #222; }
.tall { height: 32px; margin: 0 16px 0 5px; background: #b5b5b5; }
.cancel { margin-right: 19px; }
.fx { margin: 0 11px 0 19px; font: italic bold 18px "Liberation Serif", serif; color: #333; }
.formula { flex: 1; min-width: 0; height: 18px; border: 0; border-left: 1px solid #ccc; background: none; }

.grid-area { flex: 1; min-height: 0; overflow: hidden; background: #fff; border-top: 1px solid #aaa; border-bottom: 1px solid #bbb; }
.grid { width: 807px; table-layout: fixed; border-collapse: separate; border-spacing: 0; font: 14px Lato, sans-serif; color: #333; margin-top: 3px; border-top: 1px solid #aaa; }
.grid th { padding: 0; font-weight: 400; line-height: 16px; }
.grid thead th { height: 26px; width: 78px; background: #f6f6f6; border-right: 1px solid #ccc; border-bottom: 1px solid #aaa; }
.grid thead .corner { width: 27px; background: #e6e6e6; border-right-color: #aaa; }
.corner svg { margin: 4px 0 0 6px; }
.grid tbody th { height: 19px; background: #ececec; border-right: 1px solid #aaa; border-bottom: 1px solid #d6d6d6; }
.grid tbody tr:nth-child(5n) th { height: 20px; }
.grid td { padding: 0; border-right: 1px solid #c4c4c4; border-bottom: 1px solid #c4c4c4; }
.grid .picked { color: #1c6b37; background: #ebebeb; }

.sheet-tabs { flex: none; height: 31px; display: flex; align-items: flex-start; font-size: 14px; background: #f0f0f0; border-bottom: 2px solid #a9a9a9; white-space: nowrap; font-family: "Liberation Sans", sans-serif; }
.sheet-arrows { width: 73px; height: 26px; display: flex; align-items: center; gap: 17px; padding-left: 17px; border-right: 1px solid #bbb; }
.sheet-tabs a { height: 26px; padding: 4px 20px 0 21px; border-right: 1px solid #bbb; font-size: 15px; line-height: 20px; }
.sheet-tabs .bare { border-right: 0; }
.sheet-tabs .on { position: relative; padding: 4px 23px 0; background: #fff; color: #2a713f; font-weight: 700; border: 1px solid #bbb; border-top: 0; border-radius: 0 0 4px 4px; font-size: 14px; }
.pointer { position: absolute; left: 40px; top: 16px; }
.add { width: 46px; height: 26px; justify-content: center; border-right: 1px solid #bbb; }

.status { flex: none; height: 26px; display: flex; align-items: center; padding: 0 31px 0 29px; background: linear-gradient(#e2e2e2, #d2d2d2); font-size: 14px; }
.access { display: flex; align-items: center; gap: 3px; margin-left: 23px; }
.views { display: flex; margin-left: auto; }
.view { width: 43px; height: 26px; justify-content: center; }
.sel { background: #8e8e8e; }
.zoom { display: flex; align-items: center; gap: 7px; margin: 0 23px 0 10px; }
.zoom input { appearance: none; width: 120px; height: 20px; margin: 0; background: linear-gradient(#8c8c8c, #8c8c8c) no-repeat center / 100% 5px; }
.zoom input::-webkit-slider-thumb { appearance: none; width: 20px; height: 20px; border-radius: 50%; background: #fff; box-shadow: 0 0 2px rgba(0,0,0,.5); }
```
FILE: script.js
```js
const letters = document.getElementById("letters");
const rows = document.getElementById("rows");

for (const letter of "ABCDEFGHIJ") {
  const th = document.createElement("th");
  th.textContent = letter;
  if (letter === "A") th.className = "picked";
  letters.append(th);
}

for (let n = 1; n <= 40; n++) {
  const tr = rows.insertRow();
  const th = document.createElement("th");
  th.textContent = n;
  if (n === 1) th.className = "picked";
  tr.append(th);
  for (let c = 0; c < 10; c++) tr.insertCell();
}
```
